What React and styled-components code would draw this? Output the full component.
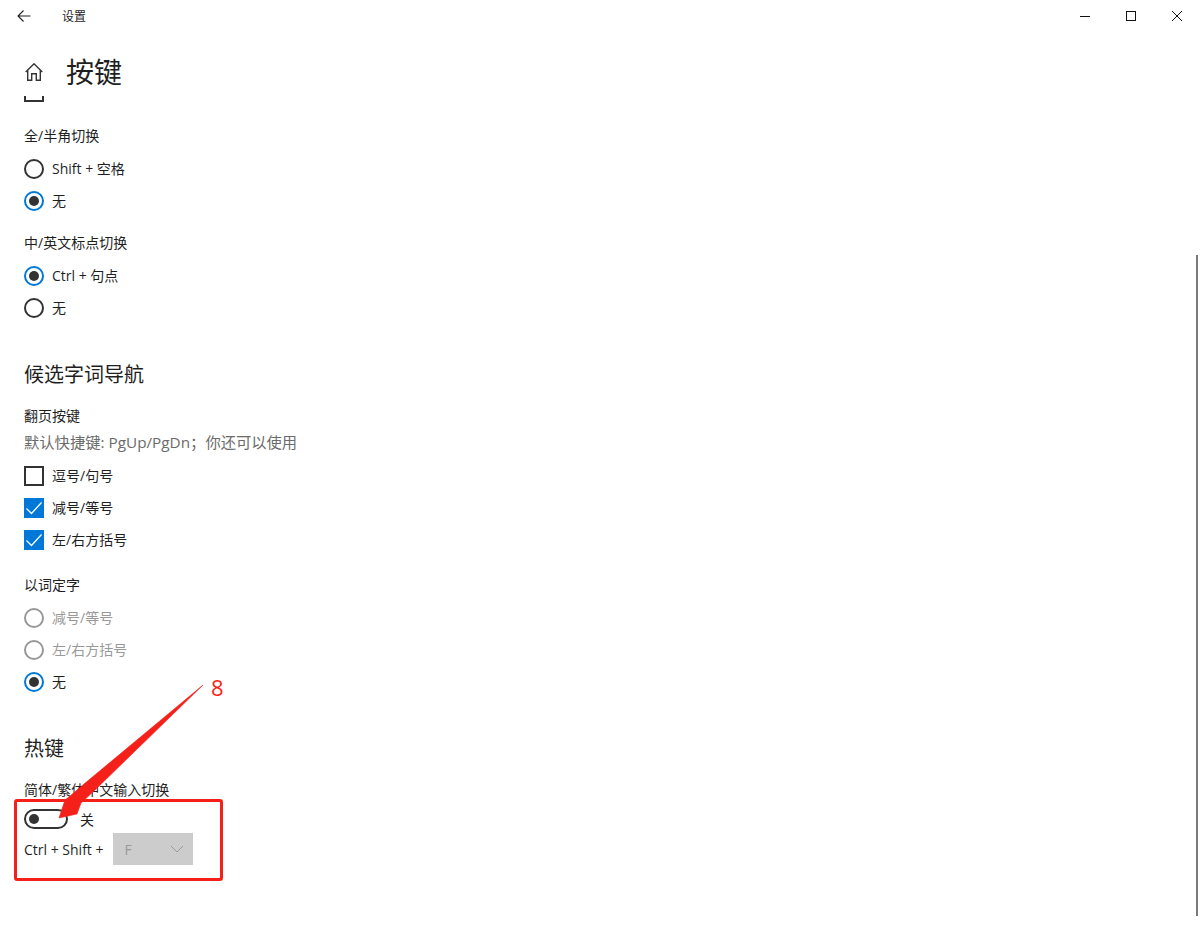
import React from 'react';
import styled, { createGlobalStyle } from 'styled-components';

const Global = createGlobalStyle`
  html, body { margin: 0; padding: 0; background: #fff; }
  body { font-family: "Open Sans", "Noto Sans CJK SC", sans-serif; color: #1f1f1f; overflow: hidden; }
`;

const Page = styled.div`
  position: relative;
  width: 1200px;
  height: 932px;
  overflow: hidden;
  background: #fff;
`;

const TitleBar = styled.header`
  display: flex;
  align-items: center;
  height: 32px;
`;

const BackButton = styled.div`
  display: flex;
  align-items: center;
  justify-content: center;
  width: 48px;
  height: 32px;
  color: #222;
`;

const AppName = styled.div`
  margin-left: 14px;
  font-size: 12px;
  flex: 1;
`;

const WinControls = styled.div`
  display: flex;
`;

const WinButton = styled.div`
  display: flex;
  align-items: center;
  justify-content: center;
  width: 46px;
  height: 32px;
`;

const PageHeader = styled.div`
  display: flex;
  align-items: center;
  height: 64px;
  padding: 16px 0 0 25px;
  box-sizing: border-box;
`;

const PageTitle = styled.h1`
  margin: 0 0 0 23px;
  font-size: 28px;
  font-weight: 400;
  line-height: 40px;
`;

const Content = styled.main`
  padding-left: 24px;
  height: 836px;
  overflow: hidden;
`;

const ClippedBox = styled.div`
  width: 16px;
  height: 4px;
  border: 2px solid #333;
  border-top: 0;
`;

const Label = styled.div`
  height: 20px;
  line-height: 20px;
  font-size: 14px;
  margin-top: ${p => p.$top}px;
`;

const Hint = styled.div`
  height: 20px;
  line-height: 20px;
  font-size: 15.3px;
  margin-top: 6px;
  color: #6b6b6b;
`;

const Heading = styled.h2`
  margin: ${p => p.$top}px 0 0;
  height: 28px;
  line-height: 28px;
  font-size: 20px;
  font-weight: 400;
`;

const Group = styled.div`
  display: flex;
  flex-direction: column;
  margin-top: ${p => p.$top}px;
`;

const Option = styled.div`
  display: flex;
  align-items: center;
  height: 32px;
  font-size: 14px;
  color: ${p => (p.$disabled ? '#999' : '#1f1f1f')};
`;

const OptionText = styled.span`
  margin-left: 8px;
  padding-bottom: 2px;
`;

const RadioMark = styled.span`
  display: flex;
  align-items: center;
  justify-content: center;
  box-sizing: border-box;
  width: 20px;
  height: 20px;
  border-radius: 50%;
  border: 2px solid ${p => (p.$disabled ? '#999' : p.$on ? '#0078d7' : '#333')};
  &::after {
    content: '';
    display: ${p => (p.$on ? 'block' : 'none')};
    width: 10px;
    height: 10px;
    border-radius: 50%;
    background: #333;
  }
`;

const CheckMark = styled.span`
  display: flex;
  align-items: center;
  justify-content: center;
  box-sizing: border-box;
  width: 20px;
  height: 20px;
  border: 2px solid ${p => (p.$on ? '#0078d7' : '#333')};
  background: ${p => (p.$on ? '#0078d7' : '#fff')};
`;

const ToggleRow = styled.div`
  display: flex;
  align-items: center;
  height: 20px;
  margin-top: 9px;
  font-size: 14px;
`;

const Toggle = styled.span`
  display: flex;
  align-items: center;
  box-sizing: border-box;
  width: 44px;
  height: 20px;
  padding-left: 3px;
  border: 2px solid #333;
  border-radius: 10px;
  margin-right: 12px;
  &::after {
    content: '';
    width: 10px;
    height: 10px;
    border-radius: 50%;
    background: #333;
  }
`;

const KeyRow = styled.div`
  display: flex;
  align-items: center;
  height: 32px;
  margin-top: 4px;
  font-size: 14px;
`;

const Select = styled.div`
  display: flex;
  align-items: center;
  justify-content: space-between;
  box-sizing: border-box;
  width: 80px;
  height: 32px;
  margin-left: 10px;
  padding: 0 9px 0 11px;
  background: #ccc;
  color: #999;
`;

const Annotation = styled.svg`
  position: absolute;
  left: 0;
  top: 0;
  pointer-events: none;
`;

const Badge = styled.div`
  position: absolute;
  left: 211px;
  top: 672px;
  font-size: 22px;
  font-weight: 500;
  line-height: 30px;
  color: #ff1f14;
`;

const Highlight = styled.div`
  position: absolute;
  left: 14px;
  top: 799px;
  width: 203px;
  height: 76px;
  border: 3px solid #f5201a;
  border-radius: 3px;
`;

const ScrollThumb = styled.div`
  position: absolute;
  left: 1196px;
  top: 255px;
  width: 2px;
  height: 661px;
  background: #7a7a7a;
`;

const Radio = ({ on, disabled, children }) => (
  <Option $disabled={disabled}>
    <RadioMark $on={on} $disabled={disabled} />
    <OptionText>{children}</OptionText>
  </Option>
);

const Check = ({ on, children }) => (
  <Option>
    <CheckMark $on={on}>
      {on && (
        <svg width="16" height="16" viewBox="0 0 16 16" fill="none" stroke="#fff" strokeWidth="1.3">
          <path d="M0.5 8.5 L5.5 13.5 L15.5 2.5" />
        </svg>
      )}
    </CheckMark>
    <OptionText>{children}</OptionText>
  </Option>
);

export default function App() {
  return (
    <Page>
      <Global />
      <TitleBar>
        <BackButton>
          <svg width="14" height="12" viewBox="0 0 14 12" fill="none" stroke="#222" strokeWidth="1.1">
            <path d="M6.5 0.5 L1 6 L6.5 11.5 M1 6 H13.5" />
          </svg>
        </BackButton>
        <AppName>设置</AppName>
        <WinControls>
          <WinButton>
            <svg width="10" height="10" viewBox="0 0 10 10" fill="none" stroke="#111" strokeWidth="1">
              <path d="M0 5.5 H10" />
            </svg>
          </WinButton>
          <WinButton>
            <svg width="10" height="10" viewBox="0 0 10 10" fill="none" stroke="#111" strokeWidth="1">
              <rect x="0.5" y="0.5" width="9" height="9" />
            </svg>
          </WinButton>
          <WinButton>
            <svg width="10" height="10" viewBox="0 0 10 10" fill="none" stroke="#111" strokeWidth="1">
              <path d="M0 0 L10 10 M10 0 L0 10" />
            </svg>
          </WinButton>
        </WinControls>
      </TitleBar>
      <PageHeader>
        <svg width="18" height="18" viewBox="0 0 18 18" fill="none" stroke="#333" strokeWidth="1.4">
          <path d="M0.7 9 L9 0.8 L17.3 9 M2.7 7.5 V17.3 H6.7 V10.7 H11.3 V17.3 H15.3 V7.5" />
        </svg>
        <PageTitle>按键</PageTitle>
      </PageHeader>
      <Content>
        <ClippedBox />
        <Label $top={24}>全/半角切换</Label>
        <Group $top={7}>
          <Radio>Shift + 空格</Radio>
          <Radio on>无</Radio>
        </Group>
        <Label $top={16}>中/英文标点切换</Label>
        <Group $top={7}>
          <Radio on>Ctrl + 句点</Radio>
          <Radio>无</Radio>
        </Group>
        <Heading $top={37}>候选字词导航</Heading>
        <Label $top={17}>翻页按键</Label>
        <Hint>默认快捷键: PgUp/PgDn；你还可以使用</Hint>
        <Group $top={8}>
          <Check>逗号/句号</Check>
          <Check on>减号/等号</Check>
          <Check on>左/右方括号</Check>
        </Group>
        <Label $top={19}>以词定字</Label>
        <Group $top={7}>
          <Radio disabled>减号/等号</Radio>
          <Radio disabled>左/右方括号</Radio>
          <Radio on>无</Radio>
        </Group>
        <Heading $top={37}>热键</Heading>
        <Label $top={17}>简体/繁体中文输入切换</Label>
        <ToggleRow>
          <Toggle />
          关
        </ToggleRow>
        <KeyRow>
          Ctrl + Shift +
          <Select>
            F
            <svg width="14" height="8" viewBox="0 0 14 8" fill="none" stroke="#999" strokeWidth="1">
              <path d="M1 1 L7 7 L13 1" />
            </svg>
          </Select>
        </KeyRow>
      </Content>
      <ScrollThumb />
      <Highlight />
      <Annotation width="1200" height="932" viewBox="0 0 1200 932">
        <path d="M203 685 L95 790 L81 803 L77 814 L59 818 L65 800 L70 796 L84 784 Z" fill="#f5201a" stroke="#f5201a" strokeWidth="0.6" strokeLinejoin="round" />
      </Annotation>
      <Badge>8</Badge>
    </Page>
  );
}
